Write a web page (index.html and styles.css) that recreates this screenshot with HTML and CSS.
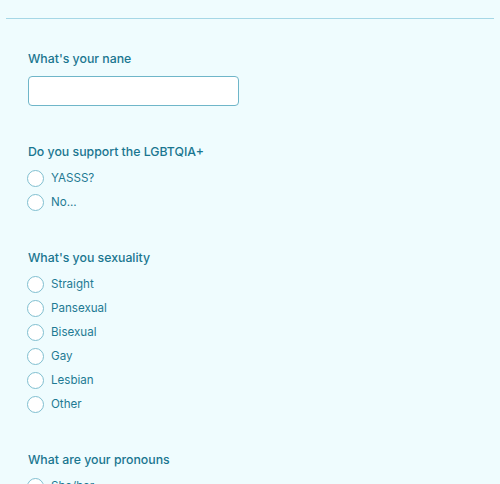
FILE: index.html
```html
<!DOCTYPE html>
<html>
<head>
<meta charset="utf-8">
<link rel="stylesheet" href="styles.css">
</head>
<body>
<div class="rule"></div>
<form class="form">
  <div class="section section-text">
    <label class="question" for="name">What's your nane</label>
    <input class="text-input" id="name" type="text">
  </div>
  <div class="section">
    <div class="question">Do you support the LGBTQIA+</div>
    <label class="option"><span class="radio"></span>YASSS?</label>
    <label class="option"><span class="radio"></span>No...</label>
  </div>
  <div class="section">
    <div class="question">What's you sexuality</div>
    <label class="option"><span class="radio"></span>Straight</label>
    <label class="option"><span class="radio"></span>Pansexual</label>
    <label class="option"><span class="radio"></span>Bisexual</label>
    <label class="option"><span class="radio"></span>Gay</label>
    <label class="option"><span class="radio"></span>Lesbian</label>
    <label class="option"><span class="radio"></span>Other</label>
  </div>
  <div class="section">
    <div class="question">What are your pronouns</div>
    <label class="option"><span class="radio"></span>She/her</label>
    <label class="option"><span class="radio"></span>He/him</label>
    <label class="option"><span class="radio"></span>They/them</label>
  </div>
</form>
</body>
</html>
```
FILE: styles.css
```css
html, body {
  margin: 0;
  padding: 0;
  background: #effcfe;
  height: 100%;
  overflow: hidden;
}
body {
  font-family: Inter, "Noto Sans", sans-serif;
  color: #1a7690;
}
.rule {
  margin: 18px 6px 0;
  height: 1px;
  background: #a6d7e6;
}
.form {
  display: flex;
  flex-direction: column;
  gap: 34px;
  padding: 30px 0 0 28px;
}
.section {
  display: flex;
  flex-direction: column;
}
.section-text {
  margin-bottom: 2px;
}
.question {
  display: block;
  font-size: 12.3px;
  font-weight: 500;
  line-height: 20px;
  margin-bottom: 4px;
}
.text-input {
  box-sizing: border-box;
  width: 211px;
  height: 30px;
  margin-top: 3px;
  border: 1px solid #6fb6c9;
  border-radius: 4px;
  background: #ffffff;
  outline: none;
}
.option {
  display: flex;
  align-items: center;
  height: 24px;
  font-size: 11.6px;
  font-weight: 400;
  color: #1e7a93;
}
.radio {
  flex: 0 0 auto;
  box-sizing: border-box;
  width: 17px;
  height: 17px;
  margin-left: -1px;
  margin-right: 7px;
  border: 1.5px solid #80bfd0;
  border-radius: 50%;
  background: #ffffff;
}
```
